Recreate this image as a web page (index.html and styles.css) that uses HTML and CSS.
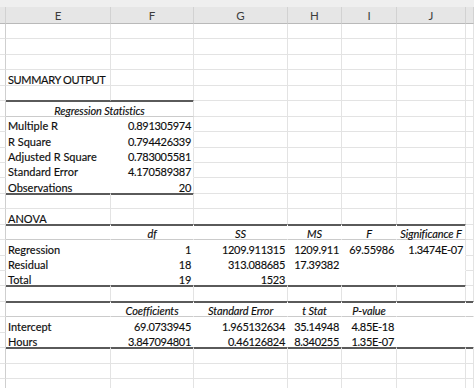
FILE: index.html
```html
<!DOCTYPE html>
<html lang="en">
<head>
  <meta charset="UTF-8" />
  <title>Regression Summary</title>
  <link rel="stylesheet" href="styles.css">
</head>
<body>
  <div class="ribbon"></div>

  <table class="sheet">
    <colgroup>
      <col class="stub"><col class="ce"><col class="cf"><col class="cg"><col class="ch"><col class="ci"><col class="cj"><col class="ck">
    </colgroup>
    <thead>
      <tr class="letters">
        <th></th><th>E</th><th>F</th><th>G</th><th>H</th><th>I</th><th>J</th><th></th>
      </tr>
    </thead>
    <tbody>
      <tr><td class="rh"></td><td></td><td></td><td></td><td></td><td></td><td></td><td></td></tr>
      <tr><td class="rh"></td><td></td><td></td><td></td><td></td><td></td><td></td><td></td></tr>
      <tr><td class="rh"></td><td></td><td></td><td></td><td></td><td></td><td></td><td></td></tr>
      <tr><td class="rh"></td><td class="caps">SUMMARY OUTPUT</td><td></td><td></td><td></td><td></td><td></td><td></td></tr>
      <tr><td class="rh"></td><td class="rule"></td><td class="rule"></td><td></td><td></td><td></td><td></td><td></td></tr>

      <!-- regression statistics -->
      <tr><td class="rh"></td><td class="hd we sub" colspan="2">Regression Statistics</td><td></td><td></td><td></td><td></td><td></td></tr>
      <tr><td class="rh"></td><td class="w">Multiple R</td><td class="num we">0.891305974</td><td></td><td></td><td></td><td></td><td></td></tr>
      <tr><td class="rh"></td><td class="w">R Square</td><td class="num we">0.794426339</td><td></td><td></td><td></td><td></td><td></td></tr>
      <tr><td class="rh"></td><td class="w">Adjusted R Square</td><td class="num we">0.783005581</td><td></td><td></td><td></td><td></td><td></td></tr>
      <tr><td class="rh"></td><td class="w">Standard Error</td><td class="num we">4.170589387</td><td></td><td></td><td></td><td></td><td></td></tr>
      <tr><td class="rh"></td><td class="w rule">Observations</td><td class="num we rule">20</td><td></td><td></td><td></td><td></td><td></td></tr>
      <tr><td class="rh"></td><td></td><td></td><td></td><td></td><td></td><td></td><td></td></tr>

      <!-- anova -->
      <tr><td class="rh"></td><td class="rule">ANOVA</td><td class="rule"></td><td class="rule"></td><td class="rule"></td><td class="rule"></td><td class="rule"></td><td></td></tr>
      <tr><td class="rh"></td><td class="w sub"></td><td class="hd w sub">df</td><td class="hd w sub">SS</td><td class="hd w sub">MS</td><td class="hd w sub">F</td><td class="hd we sub">Significance F</td><td></td></tr>
      <tr><td class="rh"></td><td class="w">Regression</td><td class="num w">1</td><td class="num w">1209.911315</td><td class="num w">1209.911</td><td class="num w">69.55986</td><td class="num we">1.3474E-07</td><td></td></tr>
      <tr><td class="rh"></td><td class="w">Residual</td><td class="num w">18</td><td class="num w">313.088685</td><td class="num w">17.39382</td><td class="w"></td><td class="we"></td><td></td></tr>
      <tr><td class="rh"></td><td class="w rule">Total</td><td class="num w rule">19</td><td class="num w rule">1523</td><td class="w rule"></td><td class="w rule"></td><td class="we rule"></td><td></td></tr>
      <tr><td class="rh"></td><td class="rule"></td><td class="rule"></td><td class="rule"></td><td class="rule"></td><td class="rule"></td><td class="rule"></td><td class="rule"></td></tr>

      <!-- coefficients -->
      <tr><td class="rh"></td><td class="w sub"></td><td class="hd w sub">Coefficients</td><td class="hd w sub">Standard Error</td><td class="hd w sub">t Stat</td><td class="hd w sub">P-value</td><td class="w sub"></td><td class="w sub"></td></tr>
      <tr><td class="rh"></td><td class="w">Intercept</td><td class="num w">69.0733945</td><td class="num w">1.965132634</td><td class="num w">35.14948</td><td class="num w">4.85E-18</td><td class="w"></td><td class="w"></td></tr>
      <tr><td class="rh"></td><td class="w rule">Hours</td><td class="num w rule">3.847094801</td><td class="num w rule">0.46126824</td><td class="num w rule">8.340255</td><td class="num w rule">1.35E-07</td><td class="w rule"></td><td class="w rule"></td></tr>
      <tr><td class="rh"></td><td></td><td></td><td></td><td></td><td></td><td></td><td></td></tr>
      <tr><td class="rh"></td><td></td><td></td><td></td><td></td><td></td><td></td><td></td></tr>
      <tr><td class="rh"></td><td></td><td></td><td></td><td></td><td></td><td></td><td></td></tr>
    </tbody>
  </table>
</body>
</html>
```

FILE: styles.css
```css
body { margin: 0; background: #fff; font-family: Lato, "Open Sans", sans-serif; color: #0e0e0e; overflow: hidden; }

.ribbon { height: 7px; background: #efefef; }

.sheet { border-collapse: separate; border-spacing: 0; table-layout: fixed; width: 474px; font-size: 11px; -webkit-text-stroke: 0.15px; }
.stub { width: 6px; }
.ce { width: 105px; }
.cf { width: 83px; }
.cg { width: 94px; }
.ch { width: 54px; }
.ci { width: 55px; }
.cj { width: 69px; }
.ck { width: 8px; }

/* column letters */
.letters th { height: 16px; padding: 0; background: #e6e6e6; color: #3c3c3c; font-weight: normal; font-size: 11.5px;
  border-right: 1px solid #d2d2d2; border-bottom: 1px solid #b9b9b9; -webkit-text-stroke: 0; }

/* cells: gridlines are the right and bottom edge of each cell */
td { height: 14.45px; padding: 0 2px; border-right: 1px solid #e3e3e3; border-bottom: 1px solid #e3e3e3;
  white-space: nowrap; overflow: visible; line-height: 11px; vertical-align: bottom; }
td.rh { padding: 0; border-right-color: #cfcfcf; }
.num { text-align: right; letter-spacing: -0.3px; }
.hd { text-align: center; font-style: italic; letter-spacing: -0.1px; }
.caps { letter-spacing: -0.35px; }

/* output tables have a white fill, so no gridlines inside */
.w { border-right-color: #fff; border-bottom-color: #fff; }
.we { border-bottom-color: #fff; }

/* table rules from the analysis output, 2px across the cell edge */
.sub { border-bottom-color: #cbcbcb; }
.rule { border-bottom-color: #5a5a5a; box-shadow: 0 1px 0 #5a5a5a; }
```
